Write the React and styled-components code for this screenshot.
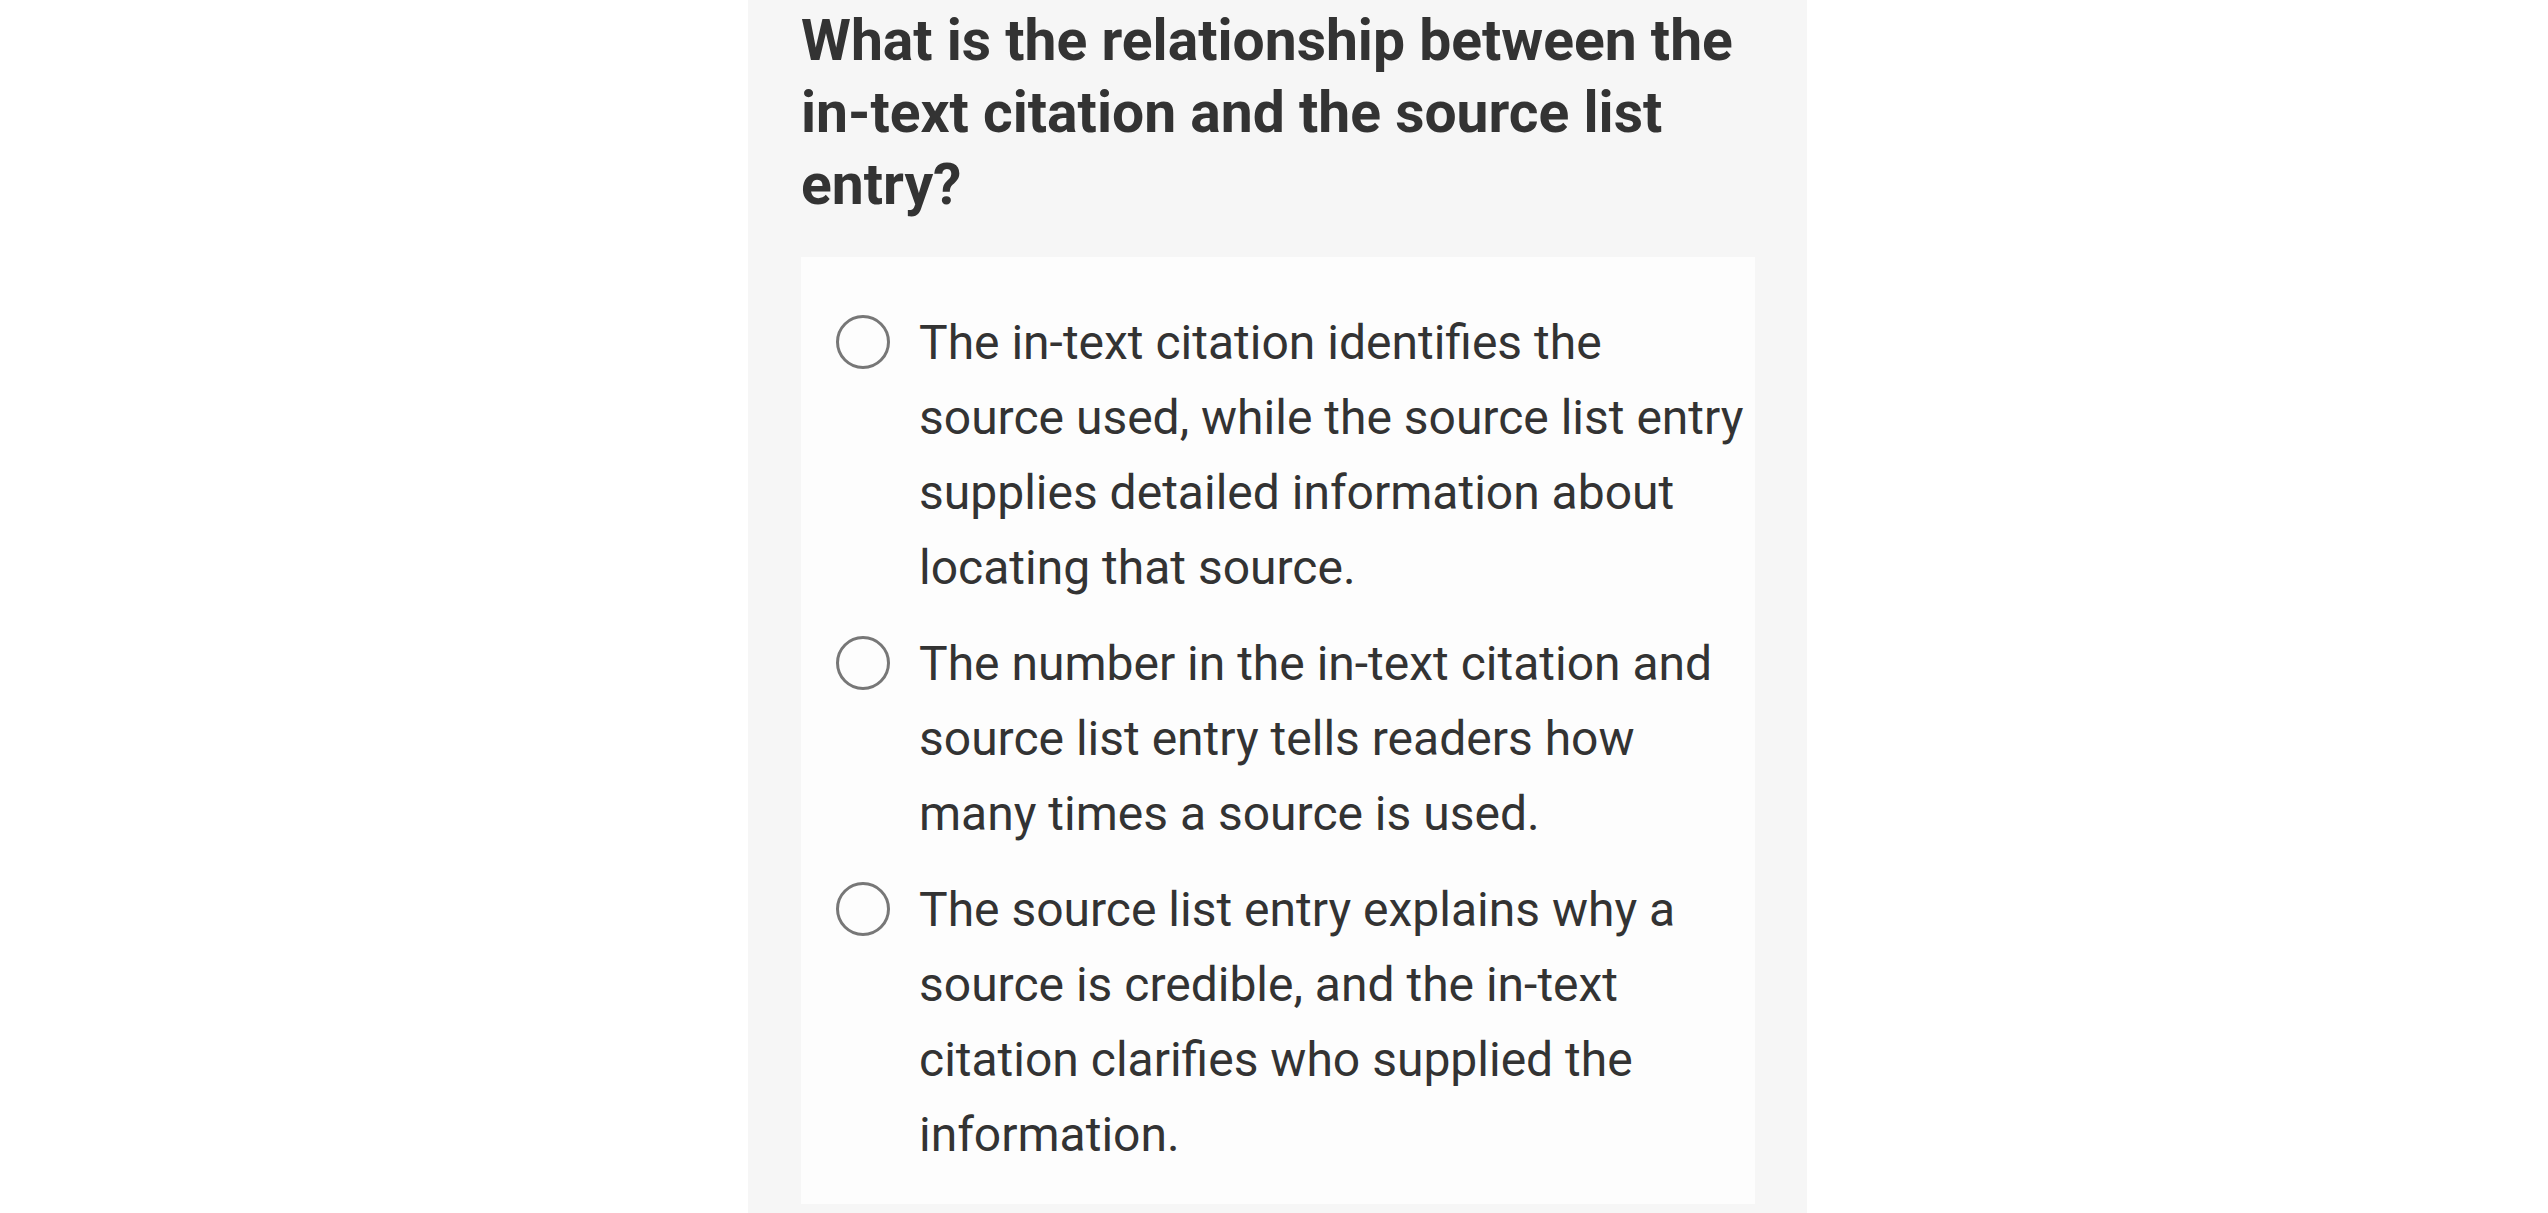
import React, { useState } from "react";
import styled, { createGlobalStyle } from "styled-components";

const GlobalStyle = createGlobalStyle`
  html, body {
    margin: 0;
    padding: 0;
    background: #ffffff;
  }
  body {
    font-family: Roboto, "Liberation Sans", Arial, sans-serif;
    color: #333333;
  }
`;

const Panel = styled.main`
  width: 1059px;
  min-height: 1213px;
  margin-left: calc(50% - 526px);
  box-sizing: border-box;
  padding: 5px 52px 0 53px;
  background: #f6f6f6;
`;

const Question = styled.h2`
  margin: 0 0 36px;
  font-size: 57px;
  line-height: 72px;
  font-weight: 700;
  color: #333333;
`;

const Card = styled.fieldset`
  margin: 0;
  border: 0;
  padding: 48px 9px 32px 35px;
  background: #fdfdfd;
  display: flex;
  flex-direction: column;
  gap: 21px;
`;

const Option = styled.label`
  display: flex;
  align-items: flex-start;
  gap: 29px;
  cursor: pointer;
`;

const Radio = styled.span`
  flex: 0 0 auto;
  width: 54px;
  height: 54px;
  margin-top: 10px;
  box-sizing: border-box;
  border-radius: 50%;
  border: 3px solid #777777;
  display: flex;
  align-items: center;
  justify-content: center;

  &::after {
    content: "";
    width: 28px;
    height: 28px;
    border-radius: 50%;
    background: ${(props) => (props.checked ? "#333333" : "transparent")};
  }
`;

const HiddenInput = styled.input`
  position: absolute;
  opacity: 0;
  pointer-events: none;
`;

const OptionText = styled.span`
  font-size: 48px;
  line-height: 75px;
  font-weight: 400;
  color: #333333;
`;

const answers = [
  "The in-text citation identifies the source used, while the source list entry supplies detailed information about locating that source.",
  "The number in the in-text citation and source list entry tells readers how many times a source is used.",
  "The source list entry explains why a source is credible, and the in-text citation clarifies who supplied the information.",
];

function App() {
  const [selected, setSelected] = useState(null);
  return (
    <>
      <GlobalStyle />
      <Panel>
        <Question>
          What is the relationship between the in-text citation and the source
          list entry?
        </Question>
        <Card>
          {answers.map((text, i) => (
            <Option key={i}>
              <HiddenInput
                type="radio"
                name="answer"
                checked={selected === i}
                onChange={() => setSelected(i)}
              />
              <Radio checked={selected === i} />
              <OptionText>{text}</OptionText>
            </Option>
          ))}
        </Card>
      </Panel>
    </>
  );
}

export default App;
